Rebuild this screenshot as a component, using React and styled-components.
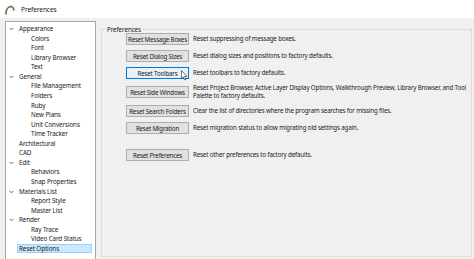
import React from "react";
import styled, { createGlobalStyle } from "styled-components";

const Global = createGlobalStyle`
  html, body { margin: 0; padding: 0; }
  body {
    background: #f0f0f0;
    font-family: "Noto Sans", "Open Sans", sans-serif;
    color: #1a1a1a;
    width: 474px;
    height: 259px;
    overflow: hidden;
  }
`;

const Window = styled.div`
  width: 474px;
  height: 259px;
  display: flex;
  flex-direction: column;
  overflow: hidden;
`;

const TitleBar = styled.div`
  height: 18px;
  flex: 0 0 18px;
  background: #ffffff;
  display: flex;
  align-items: center;
  gap: 6px;
  padding-left: 4px;
  font-size: 6.6px;
  letter-spacing: -0.1px;
  color: #222;
`;

const Body = styled.div`
  flex: 1;
  display: flex;
  padding: 3px 2px 0 5px;
  gap: 4px;
  min-height: 0;
`;

const TreePanel = styled.div`
  width: 89px;
  flex: 0 0 89px;
  background: #ffffff;
  border: 1px solid #a7a7a7;
  border-bottom: none;
  padding-top: 2px;
  box-sizing: content-box;
  height: 260px;
`;

const TreeRow = styled.div`
  height: 9.565px;
  line-height: 9.565px;
  font-size: 6.3px;
  letter-spacing: -0.1px;
  display: flex;
  align-items: center;
  white-space: nowrap;
  padding-left: ${(p) => (p.$level === 1 ? 25 : 13)}px;
  position: relative;
  color: #1a1a1a;
`;

const Chevron = styled.svg`
  position: absolute;
  left: 3px;
  top: 3px;
`;

const Selected = styled.span`
  margin-left: -2px;
  padding-left: 1px;
  width: 75px;
  height: 9px;
  line-height: 8px;
  background: #cce8ff;
  border: 1px solid #99d1ff;
  box-sizing: border-box;
`;

const Group = styled.fieldset`
  flex: 1;
  margin: 4px 0 2px 1px;
  padding: 0 0 0 24px;
  border: 1px solid #dcdcdc;
  min-width: 0;
  display: flex;
  flex-direction: column;
`;

const Legend = styled.legend`
  font-size: 6.3px;
  letter-spacing: -0.1px;
  padding: 0 2px;
  margin-left: -21px;
  color: #222;
`;

const Rows = styled.div`
  display: flex;
  flex-direction: column;
  gap: 5px;
  margin-top: -1px;
`;

const Row = styled.div`
  display: flex;
  align-items: center;
  gap: 4px;
  position: relative;
  margin-top: ${(p) => (p.$spaced ? 10 : 0)}px;
`;

const Button = styled.div`
  width: 63px;
  height: 12px;
  flex: 0 0 63px;
  box-sizing: border-box;
  background: ${(p) => (p.$hover ? "#e5f1fb" : "#e1e1e1")};
  border: 1px solid ${(p) => (p.$hover ? "#0078d7" : "#adadad")};
  font-size: 6.2px;
  letter-spacing: -0.18px;
  display: flex;
  align-items: center;
  justify-content: center;
  white-space: nowrap;
  color: #1a1a1a;
`;

const Desc = styled.div`
  font-size: 6.2px;
  letter-spacing: -0.16px;
  line-height: 8px;
  white-space: nowrap;
  color: #1a1a1a;
`;

const Cursor = styled.svg`
  position: absolute;
  left: 55px;
  top: 3px;
`;

const tree = [
  ["Appearance", 0, true],
  ["Colors", 1],
  ["Font", 1],
  ["Library Browser", 1],
  ["Text", 1],
  ["General", 0, true],
  ["File Management", 1],
  ["Folders", 1],
  ["Ruby", 1],
  ["New Plans", 1],
  ["Unit Conversions", 1],
  ["Time Tracker", 1],
  ["Architectural", 0],
  ["CAD", 0],
  ["Edit", 0, true],
  ["Behaviors", 1],
  ["Snap Properties", 1],
  ["Materials List", 0, true],
  ["Report Style", 1],
  ["Master List", 1],
  ["Render", 0, true],
  ["Ray Trace", 1],
  ["Video Card Status", 1],
  ["Reset Options", 0, false, true],
];

const rows = [
  ["Reset Message Boxes", ["Reset suppressing of message boxes."]],
  ["Reset Dialog Sizes", ["Reset dialog sizes and positions to factory defaults."]],
  ["Reset Toolbars", ["Reset toolbars to factory defaults."], true],
  [
    "Reset Side Windows",
    [
      "Reset Project Browser, Active Layer Display Options, Walkthrough Preview, Library Browser, and Tool",
      "Palette to factory defaults.",
    ],
  ],
  ["Reset Search Folders", ["Clear the list of directories where the program searches for missing files."]],
  ["Reset Migration", ["Reset migration status to allow migrating old settings again."]],
  ["Reset Preferences", ["Reset other preferences to factory defaults."], false, true],
];

export default function App() {
  return (
    <Window>
      <Global />
      <TitleBar>
        <svg width="11" height="11" viewBox="0 0 11 11">
          <path d="M1.5 10.5 Q1.8 2.5 7 2.2 Q9.5 2.3 10.2 6.5" fill="none" stroke="#c9c2a3" strokeWidth="2" />
          <path d="M2 10.5 Q2.2 3 7 2.6 Q9.3 2.7 10 6.5" fill="none" stroke="#3a3a3a" strokeWidth="0.9" />
        </svg>
        <span>Preferences</span>
      </TitleBar>
      <Body>
        <TreePanel>
          {tree.map(([label, level, exp, sel]) => (
            <TreeRow key={label} $level={level}>
              {exp && (
                <Chevron width="5" height="4" viewBox="0 0 5 4">
                  <path d="M0.5 0.8 L2.5 2.8 L4.5 0.8" fill="none" stroke="#404040" strokeWidth="0.8" />
                </Chevron>
              )}
              {sel ? <Selected>{label}</Selected> : label}
            </TreeRow>
          ))}
        </TreePanel>
        <Group>
          <Legend>Preferences</Legend>
          <Rows>
            {rows.map(([btn, desc, hover, spaced]) => (
              <Row key={btn} $spaced={spaced}>
                <Button $hover={hover}>{btn}</Button>
                <Desc>
                  {desc.map((d) => (
                    <div key={d}>{d}</div>
                  ))}
                </Desc>
                {hover && (
                  <Cursor width="7" height="11" viewBox="0 0 7 11">
                    <path d="M0.5 0.5 L0.5 8.5 L2.3 6.8 L3.6 9.9 L4.8 9.4 L3.6 6.4 L6 6.4 Z" fill="#fff" stroke="#222" strokeWidth="0.6" />
                  </Cursor>
                )}
              </Row>
            ))}
          </Rows>
        </Group>
      </Body>
    </Window>
  );
}
